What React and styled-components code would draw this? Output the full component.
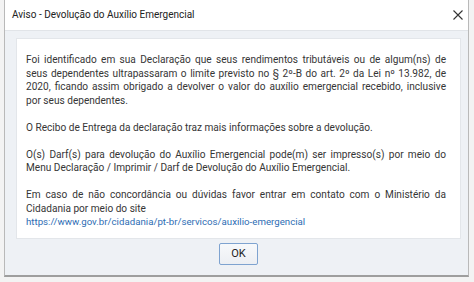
import React from "react";
import styled, { createGlobalStyle } from "styled-components";

const GlobalStyle = createGlobalStyle`
  html, body {
    margin: 0;
    padding: 0;
    background: #f3f3f3;
  }
`;

const Window = styled.div`
  margin-left: 4px;
  width: 465px;
  height: 277px;
  box-sizing: border-box;
  display: flex;
  flex-direction: column;
  border: 1px solid #b9b9b9;
  border-top: none;
  border-bottom: 2px solid #9e9e9e;
  background: #eef1f5;
`;

const TitleBar = styled.div`
  height: 29px;
  flex-shrink: 0;
  display: flex;
  align-items: center;
  justify-content: space-between;
  padding: 0 4px 1px 7px;
  background: #ffffff;
  border-bottom: 1px solid #e1e4e8;
  font-family: Roboto, "Noto Sans", sans-serif;
  font-size: 10px;
  color: #222;
`;

const CloseIcon = styled.svg`
  width: 12px;
  height: 12px;
`;

const Body = styled.div`
  flex: 1;
  display: flex;
  flex-direction: column;
  padding: 7px 7px 0 11px;
`;

const Panel = styled.div`
  background: #ffffff;
  border: 1px solid #e3e6ea;
  padding: 14px 14px 9px 9px;
  font-family: Roboto, "Liberation Sans", sans-serif;
  font-size: 10.1px;
  line-height: 13.5px;
  color: #363636;
`;

const Paragraph = styled.div`
  margin: 0 0 13.5px;

  &:last-child {
    margin-bottom: 0;
  }
`;

const Line = styled.span`
  display: block;
  white-space: nowrap;
  text-align: justify;
  text-align-last: ${(p) => (p.$last ? "left" : "justify")};
`;

const Link = styled.span`
  display: block;
  font-size: 9.7px;
  color: #2d6db4;
`;

const Footer = styled.div`
  flex: 1;
  display: flex;
  justify-content: center;
  align-items: flex-start;
  padding-top: 4px;
`;

const Button = styled.button`
  width: 39px;
  height: 22px;
  padding: 0;
  border: 1px solid #7ea3d0;
  border-radius: 2px;
  background: linear-gradient(#f7f9fb, #eceff3);
  font-family: Roboto, "Liberation Sans", sans-serif;
  font-size: 11px;
  color: #222;
`;

const paragraphs = [
  [
    "Foi identificado em sua Declaração que seus rendimentos tributáveis ou de algum(ns) de",
    "seus dependentes ultrapassaram o limite previsto no § 2º-B do art. 2º da Lei nº 13.982, de",
    "2020, ficando assim obrigado a devolver o valor do auxílio emergencial recebido, inclusive",
    "por seus dependentes.",
  ],
  ["O Recibo de Entrega da declaração traz mais informações sobre a devolução."],
  [
    "O(s) Darf(s) para devolução do Auxílio Emergencial pode(m) ser impresso(s) por meio do",
    "Menu Declaração / Imprimir / Darf de Devolução do Auxílio Emergencial.",
  ],
  [
    "Em caso de não concordância ou dúvidas favor entrar em contato com o Ministério da",
    "Cidadania por meio do site",
  ],
];

export default function App() {
  return (
    <>
      <GlobalStyle />
      <Window>
        <TitleBar>
          <span>Aviso - Devolução do Auxílio Emergencial</span>
          <CloseIcon viewBox="0 0 12 12">
            <path d="M1.5 1.5 L10.5 10.5 M10.5 1.5 L1.5 10.5" stroke="#333" strokeWidth="1.1" />
          </CloseIcon>
        </TitleBar>
        <Body>
          <Panel>
            {paragraphs.map((lines, i) => (
              <Paragraph key={i}>
                {lines.map((line, j) => (
                  <Line key={j} $last={j === lines.length - 1}>
                    {line}
                  </Line>
                ))}
                {i === paragraphs.length - 1 && (
                  <Link>https://www.gov.br/cidadania/pt-br/servicos/auxilio-emergencial</Link>
                )}
              </Paragraph>
            ))}
          </Panel>
          <Footer>
            <Button>OK</Button>
          </Footer>
        </Body>
      </Window>
    </>
  );
}
